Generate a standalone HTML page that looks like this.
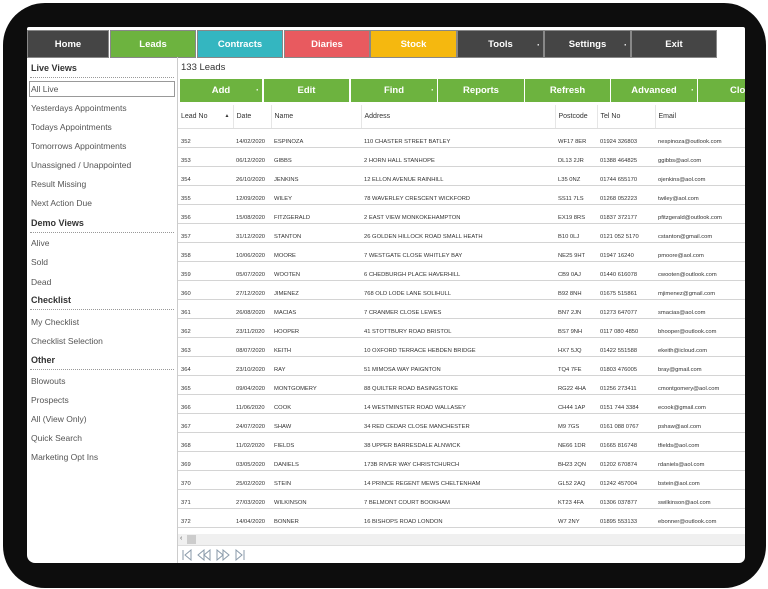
<!DOCTYPE html>
<html><head><meta charset="utf-8"><style>
*{margin:0;padding:0;box-sizing:border-box}
body{width:768px;height:589px;background:#fff;position:relative;overflow:hidden;font-family:"Liberation Sans",sans-serif}
.bezel{position:absolute;left:3px;top:3px;width:763px;height:585px;background:#0d0d0d;border-radius:42px}
.screen{position:absolute;left:27px;top:27px;width:718px;height:536px;background:#fff;border-radius:2px 2px 6px 8px;overflow:hidden}
.nav{position:absolute;top:3px;height:28px;color:#fff;font-size:9.5px;font-weight:bold;text-align:center;line-height:28px;border:1px solid #888}
.dk{background:#454545}
.tb{position:absolute;top:52px;height:23px;background:#6db33f;color:#fff;font-size:9.5px;font-weight:bold;text-align:center;line-height:23px}
.dd::after{content:"·";position:absolute;right:3px;top:0;font-size:9px}
.side{position:absolute;left:0;top:30px;width:151px;height:510px;border-right:1px solid #ccc}
.it{position:absolute;left:4px;font-size:8.5px;color:#555;line-height:12px}
.hd{position:absolute;left:4px;font-size:9px;font-weight:bold;color:#333}
.dot{position:absolute;left:3px;width:144px;border-top:1px dotted #999}
.grid{position:absolute;left:151px;top:78px;width:567px;overflow:hidden}
table{border-collapse:collapse;table-layout:fixed;width:600px}
th{height:23px;font-size:7px;font-weight:normal;color:#333;text-align:left;padding-left:3px;border-right:1px solid #e6e6e6;border-bottom:1px solid #ddd}
td{height:19px;font-size:5.8px;color:#333;padding:10px 0 0 3px;border-bottom:1px solid #d4d4d4;white-space:nowrap;overflow:hidden;vertical-align:top}
</style></head><body>
<div class="bezel"></div>
<div class="screen">
<div class="nav dk" style="left:0;width:82px">Home</div>
<div class="nav" style="left:83px;width:86px;background:#6db33f">Leads</div>
<div class="nav" style="left:170px;width:86px;background:#34b6c0">Contracts</div>
<div class="nav" style="left:257px;width:86px;background:#e85a5f">Diaries</div>
<div class="nav" style="left:343px;width:87px;background:#f5b80f">Stock</div>
<div class="nav dk dd" style="left:430px;width:87px">Tools</div>
<div class="nav dk dd" style="left:517px;width:87px">Settings</div>
<div class="nav dk" style="left:604px;width:86px">Exit</div>

<div class="side">
<div class="hd" style="top:6px">Live Views</div>
<div class="dot" style="top:20px"></div>
<div style="position:absolute;left:2px;top:24px;width:146px;height:16px;border:1px solid #999"></div>
<div class="it" style="top:26px">All Live</div>
<div class="it" style="top:45px">Yesterdays Appointments</div>
<div class="it" style="top:64px">Todays Appointments</div>
<div class="it" style="top:83px">Tomorrows Appointments</div>
<div class="it" style="top:102px">Unassigned / Unappointed</div>
<div class="it" style="top:121px">Result Missing</div>
<div class="it" style="top:140px">Next Action Due</div>
<div class="hd" style="top:161px">Demo Views</div>
<div class="dot" style="top:175px"></div>
<div class="it" style="top:180px">Alive</div>
<div class="it" style="top:199px">Sold</div>
<div class="it" style="top:219px">Dead</div>
<div class="hd" style="top:238px">Checklist</div>
<div class="dot" style="top:252px"></div>
<div class="it" style="top:259px">My Checklist</div>
<div class="it" style="top:278px">Checklist Selection</div>
<div class="hd" style="top:298px">Other</div>
<div class="dot" style="top:312px"></div>
<div class="it" style="top:318px">Blowouts</div>
<div class="it" style="top:337px">Prospects</div>
<div class="it" style="top:356px">All (View Only)</div>
<div class="it" style="top:375px">Quick Search</div>
<div class="it" style="top:394px">Marketing Opt Ins</div>
</div>

<div style="position:absolute;left:154px;top:35px;font-size:9.5px;color:#333">133 Leads</div>
<div class="tb dd" style="left:153px;width:82px">Add</div>
<div class="tb" style="left:237px;width:85px">Edit</div>
<div class="tb dd" style="left:324px;width:86px">Find</div>
<div class="tb" style="left:411px;width:86px">Reports</div>
<div class="tb" style="left:498px;width:85px">Refresh</div>
<div class="tb dd" style="left:584px;width:86px">Advanced</div>
<div class="tb" style="left:671px;width:60px;text-align:left;padding-left:32px">Close</div>

<div class="grid">
<table>
<colgroup><col style="width:55px"><col style="width:38px"><col style="width:90px"><col style="width:194px"><col style="width:42px"><col style="width:58px"><col style="width:123px"></colgroup>
<tr><th>Lead No <span style="float:right;margin-right:3px;font-size:5px">▲</span></th><th>Date</th><th>Name</th><th>Address</th><th>Postcode</th><th>Tel No</th><th>Email</th></tr>
<tr><td>352</td><td>14/02/2020</td><td>ESPINOZA</td><td>110 CHASTER STREET BATLEY</td><td>WF17 8ER</td><td>01924 326803</td><td>nespinoza@outlook.com</td></tr>
<tr><td>353</td><td>06/12/2020</td><td>GIBBS</td><td>2 HORN HALL STANHOPE</td><td>DL13 2JR</td><td>01388 464825</td><td>ggibbs@aol.com</td></tr>
<tr><td>354</td><td>26/10/2020</td><td>JENKINS</td><td>12 ELLON AVENUE RAINHILL</td><td>L35 0NZ</td><td>01744 655170</td><td>ojenkins@aol.com</td></tr>
<tr><td>355</td><td>12/09/2020</td><td>WILEY</td><td>78 WAVERLEY CRESCENT WICKFORD</td><td>SS11 7LS</td><td>01268 052223</td><td>twiley@aol.com</td></tr>
<tr><td>356</td><td>15/08/2020</td><td>FITZGERALD</td><td>2 EAST VIEW MONKOKEHAMPTON</td><td>EX19 8RS</td><td>01837 372177</td><td>pfitzgerald@outlook.com</td></tr>
<tr><td>357</td><td>31/12/2020</td><td>STANTON</td><td>26 GOLDEN HILLOCK ROAD SMALL HEATH</td><td>B10 0LJ</td><td>0121 052 5170</td><td>cstanton@gmail.com</td></tr>
<tr><td>358</td><td>10/06/2020</td><td>MOORE</td><td>7 WESTGATE CLOSE WHITLEY BAY</td><td>NE25 9HT</td><td>01947 16240</td><td>pmoore@aol.com</td></tr>
<tr><td>359</td><td>05/07/2020</td><td>WOOTEN</td><td>6 CHEDBURGH PLACE HAVERHILL</td><td>CB9 0AJ</td><td>01440 616078</td><td>cwooten@outlook.com</td></tr>
<tr><td>360</td><td>27/12/2020</td><td>JIMENEZ</td><td>768 OLD LODE LANE SOLIHULL</td><td>B92 8NH</td><td>01675 515861</td><td>mjimenez@gmail.com</td></tr>
<tr><td>361</td><td>26/08/2020</td><td>MACIAS</td><td>7 CRANMER CLOSE LEWES</td><td>BN7 2JN</td><td>01273 647077</td><td>smacias@aol.com</td></tr>
<tr><td>362</td><td>23/11/2020</td><td>HOOPER</td><td>41 STOTTBURY ROAD BRISTOL</td><td>BS7 9NH</td><td>0117 080 4850</td><td>bhooper@outlook.com</td></tr>
<tr><td>363</td><td>08/07/2020</td><td>KEITH</td><td>10 OXFORD TERRACE HEBDEN BRIDGE</td><td>HX7 5JQ</td><td>01422 551588</td><td>ekeith@icloud.com</td></tr>
<tr><td>364</td><td>23/10/2020</td><td>RAY</td><td>51 MIMOSA WAY PAIGNTON</td><td>TQ4 7FE</td><td>01803 476005</td><td>bray@gmail.com</td></tr>
<tr><td>365</td><td>09/04/2020</td><td>MONTGOMERY</td><td>88 QUILTER ROAD BASINGSTOKE</td><td>RG22 4HA</td><td>01256 273411</td><td>cmontgomery@aol.com</td></tr>
<tr><td>366</td><td>11/06/2020</td><td>COOK</td><td>14 WESTMINSTER ROAD WALLASEY</td><td>CH44 1AP</td><td>0151 744 3384</td><td>ecook@gmail.com</td></tr>
<tr><td>367</td><td>24/07/2020</td><td>SHAW</td><td>34 RED CEDAR CLOSE MANCHESTER</td><td>M9 7GS</td><td>0161 088 0767</td><td>pshaw@aol.com</td></tr>
<tr><td>368</td><td>11/02/2020</td><td>FIELDS</td><td>38 UPPER BARRESDALE ALNWICK</td><td>NE66 1DR</td><td>01665 816748</td><td>tfields@aol.com</td></tr>
<tr><td>369</td><td>03/05/2020</td><td>DANIELS</td><td>173B RIVER WAY CHRISTCHURCH</td><td>BH23 2QN</td><td>01202 670874</td><td>rdaniels@aol.com</td></tr>
<tr><td>370</td><td>25/02/2020</td><td>STEIN</td><td>14 PRINCE REGENT MEWS CHELTENHAM</td><td>GL52 2AQ</td><td>01242 457004</td><td>bstein@aol.com</td></tr>
<tr><td>371</td><td>27/03/2020</td><td>WILKINSON</td><td>7 BELMONT COURT BOOKHAM</td><td>KT23 4FA</td><td>01306 037877</td><td>swilkinson@aol.com</td></tr>
<tr><td>372</td><td>14/04/2020</td><td>BONNER</td><td>16 BISHOPS ROAD LONDON</td><td>W7 2NY</td><td>01895 553133</td><td>ebonner@outlook.com</td></tr>
</table>
</div>
<div style="position:absolute;left:151px;top:507px;width:567px;height:12px;background:#f0f0f0;border-bottom:1px solid #ddd"></div>
<div style="position:absolute;left:153px;top:508px;font-size:7px;color:#555">‹</div>
<div style="position:absolute;left:160px;top:508px;width:9px;height:9px;background:#ccc"></div>
<svg style="position:absolute;left:155px;top:522px" width="70" height="12" viewBox="0 0 70 12" fill="none" stroke="#8a9aaa" stroke-width="1">
<path d="M1 1V11M9 1L3 6L9 11Z"/>
<path d="M22 1L16 6L22 11ZM28 1L22 6L28 11Z"/>
<path d="M35 1L41 6L35 11ZM41 1L47 6L41 11Z"/>
<path d="M54 1L60 6L54 11ZM62 1V11"/>
</svg>
</div>
</body></html>
